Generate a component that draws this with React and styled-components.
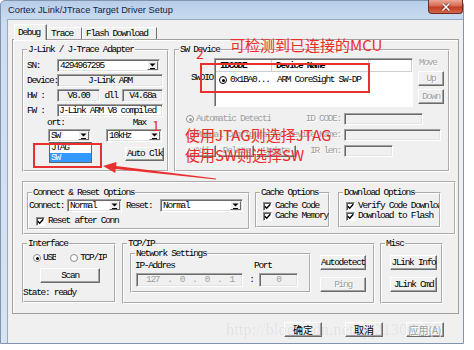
import React from "react";
import styled, { createGlobalStyle } from "styled-components";

const UI_FONT = `"Liberation Mono", "DejaVu Sans Mono", monospace`;
const CJK_FONT = `"Noto Sans CJK SC", "Noto Sans", sans-serif`;
const RED = "#ec2b2b";
const GRAY_TEXT = "#a0a0a0";

const GlobalStyle = createGlobalStyle`
  html, body { margin: 0; padding: 0; background: #ffffff; }
  body { width: 474px; height: 350px; overflow: hidden; }
  *, *::before, *::after { box-sizing: border-box; }
`;

const Page = styled.div`
  position: relative;
  width: 474px;
  height: 350px;
  background: #fff;
  font-family: ${UI_FONT};
  font-size: 9.5px;
  letter-spacing: -1.3px;
  line-height: 12px;
  color: #000;
`;

const Window = styled.div`
  width: 464px;
  height: 344px;
  border: 1px solid #8194ad;
  border-radius: 5px 5px 0 0;
  background: linear-gradient(180deg, #b8cee9 0%, #cddef2 7%, #d5e3f3 100%);
  padding: 0 0 0 6px;
  display: flex;
  flex-direction: column;
`;

const TitleBar = styled.div`
  height: 18px;
  display: flex;
  justify-content: space-between;
  align-items: flex-start;
  padding-left: 1px;
`;

const Title = styled.span`
  font-family: "Liberation Sans", Arial, sans-serif;
  font-size: 9.3px;
  letter-spacing: 0;
  line-height: 11px;
  margin-top: 4px;
  color: #13243b;
`;

const CloseButton = styled.div`
  width: 35px;
  height: 14px;
  margin-top: -1px;
  border: 1px solid #6e2b22;
  border-top: none;
  border-radius: 0 0 4px 4px;
  background: linear-gradient(180deg, #eaa896 0%, #da6a52 45%, #c33d22 55%, #d2664c 100%);
  display: flex;
  align-items: center;
  justify-content: center;
`;

const Client = styled.div`
  flex: 1;
  background: #f0f0f0;
  border-left: 1px solid #98aac2;
  border-top: 1px solid #98aac2;
  padding: 4px 4px 0 4px;
  display: flex;
  flex-direction: column;
`;

const TabStrip = styled.div`
  display: flex;
  align-items: flex-end;
  height: 16px;
  padding-left: 2px;
  margin-bottom: -1px;
  position: relative;
  z-index: 1;
`;

const Tab = styled.div`
  height: ${(p) => (p.$active ? 16 : 12)}px;
  margin-bottom: ${(p) => (p.$active ? 0 : 1)}px;
  padding: ${(p) => (p.$active ? "0 6px 0 3px" : "0 8px 0 3px")};
  display: flex;
  align-items: center;
  background: #f0f0f0;
  border: 1px solid;
  border-bottom: none;
  border-color: #ffffff #6f6f6f #ffffff #ffffff;
  box-shadow: ${(p) => (p.$active ? "inset -1px 0 #b4b4b4" : "none")};
  white-space: nowrap;
`;

const TabPanel = styled.div`
  height: 275px;
  border: 1px solid #a0a0a0;
  box-shadow: inset 1px 1px #ffffff;
  padding: 5px 0 0 9px;
  display: flex;
  flex-direction: column;
`;

const Row = styled.div`
  display: flex;
  align-items: flex-start;
  gap: ${(p) => p.$gap ?? 0}px;
  margin-top: ${(p) => p.$mt ?? 0}px;
`;

const Group = styled.fieldset`
  margin: 0;
  min-width: 0;
  padding: ${(p) => p.$pt ?? 4}px 0 0 3px;
  border: 2px groove #ffffff;
  width: ${(p) => p.$w}px;
  height: ${(p) => p.$h}px;
  flex: none;
`;

const Legend = styled.legend`
  padding: 0 1px;
  height: 10px;
  line-height: 10px;
  white-space: nowrap;
`;

const OptionsFrame = styled.div`
  margin-top: 9px;
  width: 434px;
  height: 54px;
  border: 2px groove #ffffff;
  padding: 5px 0 0 3px;
  display: flex;
  align-items: flex-start;
  gap: 5px;
`;

const InfoGrid = styled.div`
  display: grid;
  grid-template-columns: 30px auto;
  grid-auto-rows: 13px;
  row-gap: 2px;
  align-items: center;
`;

const Label = styled.span`
  white-space: nowrap;
  color: ${(p) => (p.$disabled ? GRAY_TEXT : "#000")};
  text-shadow: ${(p) => (p.$disabled ? "1px 1px #fff" : "none")};
  justify-self: ${(p) => (p.$end ? "end" : "start")};
  padding-right: ${(p) => (p.$end ? 3 : 0)}px;
`;

const Field = styled.div`
  width: ${(p) => p.$w}px;
  height: ${(p) => p.$h ?? 13}px;
  background: ${(p) => (p.$white ? "#ffffff" : "#f0f0f0")};
  border: 1px solid;
  border-color: #a0a0a0 #ffffff #ffffff #a0a0a0;
  box-shadow: inset 1px 1px #6b6b6b, inset -1px -1px #e3e3e3;
  display: flex;
  align-items: center;
  justify-content: ${(p) => (p.$center ? "center" : "flex-start")};
  padding-left: ${(p) => (p.$center ? 0 : 1)}px;
  color: ${(p) => (p.$disabled ? GRAY_TEXT : "#000")};
  white-space: nowrap;
  overflow: hidden;
`;

const Combo = styled.div`
  width: ${(p) => p.$w}px;
  height: 13px;
  background: #ffffff;
  border: 1px solid;
  border-color: #a0a0a0 #ffffff #ffffff #a0a0a0;
  box-shadow: inset 1px 1px #6b6b6b, inset -1px -1px #e3e3e3;
  display: flex;
  align-items: stretch;
  flex: none;
`;

const ComboValue = styled.span`
  flex: 1;
  padding-left: 2px;
  display: flex;
  align-items: center;
  white-space: nowrap;
  overflow: hidden;
`;

const DropButton = styled.span`
  width: 11px;
  margin: 1px 1px 1px 0;
  background: #f0f0f0;
  border: 1px solid;
  border-color: #f0f0f0 #6b6b6b #6b6b6b #ffffff;
  display: flex;
  align-items: center;
  justify-content: center;
`;

const DropArrow = () => (
  <DropButton>
    <svg width="7" height="6" viewBox="0 0 7 6">
      <path d="M0.5 0.5 H6.5 L3.5 3.5 Z" fill="#000" />
      <rect x="1" y="5" width="5" height="1" fill="#000" />
    </svg>
  </DropButton>
);

const Button = styled.div`
  width: ${(p) => p.$w}px;
  height: ${(p) => p.$h ?? 15}px;
  flex: none;
  display: flex;
  align-items: center;
  justify-content: center;
  background: #f0f0f0;
  border: 1px solid;
  border-color: #ffffff #6b6b6b #6b6b6b #ffffff;
  box-shadow: inset -1px -1px #a0a0a0;
  color: ${(p) => (p.$disabled ? GRAY_TEXT : "#000")};
  text-shadow: ${(p) => (p.$disabled ? "1px 1px #fff" : "none")};
  white-space: nowrap;
`;

const HWRow = styled.div`
  width: 106px;
  display: flex;
  align-items: center;
  justify-content: space-between;
`;

const PortLabels = styled.div`
  display: flex;
  justify-content: space-between;
  height: 9px;
  line-height: 9px;
  margin-top: 1px;
  padding: 0 21px 0 20px;
`;

const PortCombos = styled.div`
  display: flex;
  gap: 15px;
  margin-top: 2px;
  padding-left: 21px;
`;

const AutoRow = styled.div`
  display: flex;
  justify-content: flex-end;
  margin-top: 5px;
  padding-right: 3px;
`;

/* SW device */
const DeviceTop = styled.div`
  display: flex;
  align-items: flex-start;
  height: 49px;
`;

const SideLabel = styled.div`
  width: 35px;
  padding: 14px 0 0 12px;
  white-space: nowrap;
  overflow: hidden;
`;

const ListView = styled.div`
  width: 199px;
  height: 49px;
  background: #ffffff;
  border: 1px solid;
  border-color: #a0a0a0 #ffffff #ffffff #a0a0a0;
  box-shadow: inset 1px 1px #6b6b6b;
  display: flex;
  flex-direction: column;
`;

const ListHeader = styled.div`
  display: flex;
  height: 12px;
  margin: 1px 0 0 1px;
`;

const HeadCell = styled.div`
  width: ${(p) => (p.$w ? `${p.$w}px` : "auto")};
  flex: ${(p) => (p.$w ? "none" : "1")};
  border-right: 1px solid #cfcfcf;
  border-bottom: 1px solid #cfcfcf;
  padding-left: 4px;
  line-height: 11px;
  font-weight: 700;
  white-space: nowrap;
`;

const ListRow = styled.div`
  display: flex;
  height: 12px;
  margin-top: 2px;
  align-items: center;
`;

const Cell = styled.div`
  width: ${(p) => (p.$w ? `${p.$w}px` : "auto")};
  display: flex;
  align-items: center;
  gap: 3px;
  padding-left: ${(p) => p.$pl ?? 4}px;
  white-space: nowrap;
`;

const MoveCol = styled.div`
  margin-left: 5px;
  width: 26px;
  display: flex;
  flex-direction: column;
  gap: 3px;
`;

const MoveLabel = styled.div`
  height: 10px;
  line-height: 10px;
  padding-left: 1px;
  color: ${GRAY_TEXT};
  text-shadow: 1px 1px #fff;
`;

const DetectGrid = styled.div`
  margin-top: 6px;
  display: grid;
  grid-template-columns: 125px 40px auto;
  grid-auto-rows: 12px;
  row-gap: 4px;
  align-items: center;
`;

const RadioLine = styled.div`
  display: flex;
  align-items: center;
  gap: ${(p) => p.$gap ?? 2}px;
  padding-left: ${(p) => p.$pl ?? 0}px;
  width: ${(p) => (p.$w ? `${p.$w}px` : "auto")};
  overflow: hidden;
  white-space: nowrap;
  color: ${(p) => (p.$disabled ? GRAY_TEXT : "#000")};
`;

const SmallButtons = styled.div`
  display: flex;
  gap: 2px;
  padding-left: 7px;
`;

const RadioCircle = styled.span`
  width: 8px;
  height: 8px;
  flex: none;
  border-radius: 50%;
  background: #ffffff;
  border: ${(p) => (p.$bold ? "1.5px solid #000" : "1px solid #8a8a8a")};
  display: flex;
  align-items: center;
  justify-content: center;
  &::after {
    content: "";
    width: 3px;
    height: 3px;
    border-radius: 50%;
    background: ${(p) => (p.$checked ? (p.$disabled ? "#9a9a9a" : "#000") : "transparent")};
  }
`;

/* options */
const ConnectRow = styled.div`
  display: flex;
  align-items: center;
  height: 13px;
  margin-left: -3px;
`;

const FixedLabel = styled.span`
  width: ${(p) => p.$w}px;
  margin-left: ${(p) => p.$ml ?? 0}px;
  flex: none;
  white-space: nowrap;
`;

const CheckList = styled.div`
  display: flex;
  flex-direction: column;
  margin: ${(p) => p.$mt ?? 0}px 0 0 ${(p) => p.$ml ?? 3}px;
  overflow: ${(p) => (p.$clip ? "hidden" : "visible")};
  width: ${(p) => (p.$clip ? `${p.$clip}px` : "auto")};
`;

const CheckLine = styled.div`
  display: flex;
  align-items: center;
  height: 10px;
  gap: 3px;
  white-space: nowrap;
`;

const CheckBox = styled.span`
  width: 9px;
  height: 9px;
  flex: none;
  background: #ffffff;
  border: 1px solid;
  border-color: #8a8a8a #ffffff #ffffff #8a8a8a;
  box-shadow: inset 1px 1px #555;
  display: flex;
  align-items: center;
  justify-content: center;
`;

const Check = () => (
  <CheckBox>
    <svg width="7" height="7" viewBox="0 0 7 7">
      <path d="M0.8 3.2 L2.7 5.2 L6.3 1.2" fill="none" stroke="#000" strokeWidth="1.4" />
    </svg>
  </CheckBox>
);

/* interface */
const InterfaceRadios = styled.div`
  display: flex;
  align-items: center;
  height: 10px;
  padding-left: 6px;
`;

const ScanWrap = styled.div`
  margin: 5px 0 0 13px;
`;

const StateText = styled.div`
  margin: 5px 0 0 -4px;
  height: 10px;
  line-height: 10px;
  white-space: nowrap;
`;

const NetGrid = styled.div`
  display: grid;
  grid-template-columns: 108px 15px 39px;
  grid-template-rows: 10px 14px;
  row-gap: 2px;
  align-items: center;
  padding-left: 1px;
`;

const IPSegments = styled.div`
  width: 100%;
  display: flex;
  justify-content: space-around;
  color: ${GRAY_TEXT};
  padding: 0 4px;
`;

const Colon = styled.span`
  justify-self: center;
`;

const ButtonColumn = styled.div`
  display: flex;
  flex-direction: column;
  gap: 7px;
  margin: 6px 0 0 ${(p) => p.$ml}px;
`;

const DialogButtons = styled.div`
  display: flex;
  justify-content: flex-end;
  gap: 23px;
  margin-top: 8px;
  padding-right: 15px;
  font-family: ${CJK_FONT};
  font-size: 10px;
  letter-spacing: 0;
`;

/* overlays */
const Note = styled.div`
  position: absolute;
  left: ${(p) => p.$x}px;
  top: ${(p) => p.$y}px;
  font-family: ${CJK_FONT};
  font-size: ${(p) => p.$size}px;
  line-height: 1;
  letter-spacing: ${(p) => p.$ls ?? 0}px;
  color: ${RED};
  white-space: nowrap;
`;

const RedBox = styled.div`
  position: absolute;
  left: ${(p) => p.$x}px;
  top: ${(p) => p.$y}px;
  width: ${(p) => p.$w}px;
  height: ${(p) => p.$h}px;
  border: 2px solid #e8302f;
`;

const ArrowSvg = styled.svg`
  position: absolute;
  left: 98px;
  top: 158px;
`;

const DropList = styled.div`
  position: absolute;
  left: 49px;
  top: 142px;
  width: 43px;
  height: 21px;
  background: #ffffff;
  border: 1px solid #646464;
  display: flex;
  flex-direction: column;
`;

const DropItem = styled.div`
  height: 9.5px;
  line-height: 9.5px;
  padding-left: 1px;
  background: ${(p) => (p.$selected ? "#3399ff" : "transparent")};
  color: ${(p) => (p.$selected ? "#ffffff" : "#000")};
`;

const Watermark = styled.div`
  position: absolute;
  left: 226px;
  top: 322px;
  font-family: "Liberation Serif", serif;
  font-size: 16px;
  letter-spacing: 0.2px;
  line-height: 16px;
  color: rgba(0, 0, 0, 0.07);
  white-space: nowrap;
  pointer-events: none;
`;

export default function App() {
  return (
    <>
      <GlobalStyle />
      <Page>
        <Window>
          <TitleBar>
            <Title>Cortex JLink/JTrace Target Driver Setup</Title>
            <CloseButton>
              <svg width="10" height="8" viewBox="0 0 10 8">
                <path d="M1.5 0.5 L8.5 7.5 M8.5 0.5 L1.5 7.5" stroke="#5a1a10" strokeWidth="2.6" />
                <path d="M1.5 0.5 L8.5 7.5 M8.5 0.5 L1.5 7.5" stroke="#ffffff" strokeWidth="1.6" />
              </svg>
            </CloseButton>
          </TitleBar>
          <Client>
            <TabStrip>
              <Tab $active>Debug</Tab>
              <Tab>Trace</Tab>
              <Tab>Flash Download</Tab>
            </TabStrip>
            <TabPanel>
              <Row $gap={5}>
                <Group $w={147} $h={127}>
                  <Legend>J-Link / J-Trace Adapter</Legend>
                  <InfoGrid>
                    <Label>SN:</Label>
                    <Combo $w={103}>
                      <ComboValue>4294967295</ComboValue>
                      <DropArrow />
                    </Combo>
                    <Label>Device:</Label>
                    <Field $w={106} $center>J-Link ARM</Field>
                    <Label>HW :</Label>
                    <HWRow>
                      <Field $w={43} $center>V8.00</Field>
                      <Label>dll</Label>
                      <Field $w={41} $center>V4.68a</Field>
                    </HWRow>
                    <Label>FW :</Label>
                    <Field $w={106} $white>J-Link ARM V8 compiled l</Field>
                  </InfoGrid>
                  <PortLabels>
                    <span>ort:</span>
                    <span>Max</span>
                  </PortLabels>
                  <PortCombos>
                    <Combo $w={43}>
                      <ComboValue>SW</ComboValue>
                      <DropArrow />
                    </Combo>
                    <Combo $w={56}>
                      <ComboValue>10kHz</ComboValue>
                      <DropArrow />
                    </Combo>
                  </PortCombos>
                  <AutoRow>
                    <Button $w={39} $h={14}>Auto Clk</Button>
                  </AutoRow>
                </Group>

                <Group $w={276} $h={127} $pt={3}>
                  <Legend>SW Device</Legend>
                  <DeviceTop>
                    <SideLabel>SWDIO</SideLabel>
                    <ListView>
                      <ListHeader>
                        <HeadCell $w={56}>IDCODE</HeadCell>
                        <HeadCell $w={97}>Device Name</HeadCell>
                        <HeadCell />
                      </ListHeader>
                      <ListRow>
                        <Cell $w={57} $pl={4}>
                          <RadioCircle $checked $bold />
                          0x1BA0...
                        </Cell>
                        <Cell $pl={5}>ARM CoreSight SW-DP</Cell>
                      </ListRow>
                    </ListView>
                    <MoveCol>
                      <MoveLabel>Move</MoveLabel>
                      <Button $w={26} $h={15} $disabled>Up</Button>
                      <Button $w={26} $h={15} $disabled>Down</Button>
                    </MoveCol>
                  </DeviceTop>
                  <DetectGrid>
                    <RadioLine $pl={7} $w={92} $disabled>
                      <RadioCircle $checked $disabled />
                      Automatic Detection
                    </RadioLine>
                    <Label $disabled $end>ID CODE:</Label>
                    <Field $w={79} $h={12} />
                    <RadioLine $pl={7} $w={120} $disabled>
                      <RadioCircle />
                      Manual Configuration
                    </RadioLine>
                    <Label $disabled $end>Device Name:</Label>
                    <Field $w={97} $h={12} />
                    <SmallButtons>
                      <Button $w={30} $h={12} $disabled>Add</Button>
                      <Button $w={36} $h={12} $disabled>Delete</Button>
                      <Button $w={40} $h={12} $disabled>Update</Button>
                    </SmallButtons>
                    <Label $disabled $end>IR len:</Label>
                    <Field $w={49} $h={12} />
                  </DetectGrid>
                </Group>
              </Row>

              <OptionsFrame>
                <Group $w={223} $h={42} $pt={1}>
                  <Legend>Connect &amp; Reset Options</Legend>
                  <ConnectRow>
                    <FixedLabel $w={38}>Connect:</FixedLabel>
                    <Combo $w={55}>
                      <ComboValue>Normal</ComboValue>
                      <DropArrow />
                    </Combo>
                    <FixedLabel $w={34} $ml={4}>Reset:</FixedLabel>
                    <Combo $w={83}>
                      <ComboValue>Normal</ComboValue>
                      <DropArrow />
                    </Combo>
                  </ConnectRow>
                  <CheckList $mt={4} $ml={4}>
                    <CheckLine>
                      <Check />
                      Reset after Conn
                    </CheckLine>
                  </CheckList>
                </Group>
                <Group $w={75} $h={40} $pt={3}>
                  <Legend>Cache Options</Legend>
                  <CheckList>
                    <CheckLine>
                      <Check />
                      Cache Code
                    </CheckLine>
                    <CheckLine>
                      <Check />
                      Cache Memory
                    </CheckLine>
                  </CheckList>
                </Group>
                <Group $w={103} $h={40} $pt={3} style={{ marginLeft: 3 }}>
                  <Legend>Download Options</Legend>
                  <CheckList $clip={93}>
                    <CheckLine>
                      <Check />
                      Verify Code Download
                    </CheckLine>
                    <CheckLine>
                      <Check />
                      Download to Flash
                    </CheckLine>
                  </CheckList>
                </Group>
              </OptionsFrame>

              <Row $mt={4} $gap={6}>
                <Group $w={94} $h={64} $pt={4}>
                  <Legend>Interface</Legend>
                  <InterfaceRadios>
                    <RadioLine>
                      <RadioCircle $checked />
                      USB
                    </RadioLine>
                    <RadioLine style={{ marginLeft: 14 }}>
                      <RadioCircle />
                      TCP/IP
                    </RadioLine>
                  </InterfaceRadios>
                  <ScanWrap>
                    <Button $w={60} $h={15}>Scan</Button>
                  </ScanWrap>
                  <StateText>State: ready</StateText>
                </Group>

                <Group $w={253} $h={65} $pt={0}>
                  <Legend>TCP/IP</Legend>
                  <Row>
                    <Group $w={181} $h={44} $pt={2} style={{ marginLeft: 3 }}>
                      <Legend>Network Settings</Legend>
                      <NetGrid>
                        <Label style={{ marginLeft: -1 }}>IP-Addres</Label>
                        <span />
                        <Label style={{ marginLeft: -5 }}>Port</Label>
                        <Field $w={107} $h={14}>
                          <IPSegments>
                            <span>127</span>
                            <span>.</span>
                            <span>0</span>
                            <span>.</span>
                            <span>0</span>
                            <span>.</span>
                            <span>1</span>
                          </IPSegments>
                        </Field>
                        <Colon>:</Colon>
                        <Field $w={39} $h={14} $center $disabled>0</Field>
                      </NetGrid>
                    </Group>
                    <ButtonColumn $ml={9}>
                      <Button $w={46}>Autodetect</Button>
                      <Button $w={46} $disabled>Ping</Button>
                    </ButtonColumn>
                  </Row>
                </Group>

                <Group $w={63} $h={65} $pt={0} style={{ marginLeft: -1 }}>
                  <Legend>Misc</Legend>
                  <ButtonColumn $ml={5}>
                    <Button $w={47}>JLink Info</Button>
                    <Button $w={47}>JLink Cmd</Button>
                  </ButtonColumn>
                </Group>
              </Row>
            </TabPanel>

            <DialogButtons>
              <Button $w={38} $h={15}>确定</Button>
              <Button $w={38} $h={15}>取消</Button>
              <Button $w={38} $h={15} $disabled>应用(A)</Button>
            </DialogButtons>
          </Client>
        </Window>

        <DropList>
          <DropItem>JTAG</DropItem>
          <DropItem $selected>SW</DropItem>
        </DropList>

        <RedBox $x={200} $y={63} $w={170} $h={30} />
        <RedBox $x={33} $y={143} $w={69} $h={25} />
        <ArrowSvg width="125" height="26" viewBox="0 0 125 26">
          <polygon
            points="5,8 18.5,4 18.1,8 118.1,20.5 117.9,21.5 17.7,11 17.3,15"
            fill="#e8302f"
          />
        </ArrowSvg>

        <Note $x={196} $y={46} $size={14}>2</Note>
        <Note $x={152} $y={118} $size={14}>1</Note>
        <Note $x={230} $y={37} $size={15}>可检测到已连接的MCU</Note>
        <Note $x={185} $y={127} $size={15}>使用JTAG则选择JTAG</Note>
        <Note $x={185} $y={147} $size={15}>使用SW则选择SW</Note>

        <Watermark>http://blog.csdn.net/qq21306836</Watermark>
      </Page>
    </>
  );
}
